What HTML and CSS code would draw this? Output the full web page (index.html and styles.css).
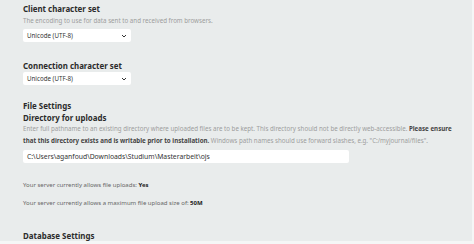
FILE: index.html
```html
<!DOCTYPE html>
<html lang="en">
<head>
    <meta charset="UTF-8">
    <meta name="viewport" content="width=device-width, initial-scale=1.0">
    <title>Installation</title>
    <link rel="stylesheet" href="styles.css">
</head>
<body>
    <div class="page">
        <div class="field">
            <div class="label">Client character set</div>
            <div class="hint">The encoding to use for data sent to and received from browsers.</div>
            <div class="select">
                <span>Unicode (UTF-8)</span>
                <svg width="6" height="4" viewBox="0 0 6 4"><path d="M1 1 L3 3 L5 1" fill="none" stroke="#333" stroke-width="1"/></svg>
            </div>
        </div>

        <div class="field second">
            <div class="label">Connection character set</div>
            <div class="select">
                <span>Unicode (UTF-8)</span>
                <svg width="6" height="4" viewBox="0 0 6 4"><path d="M1 1 L3 3 L5 1" fill="none" stroke="#333" stroke-width="1"/></svg>
            </div>
        </div>

        <div class="files">
            <div class="section-title">File Settings</div>
            <div class="label">Directory for uploads</div>
            <div class="hint wide">Enter full pathname to an existing directory where uploaded files are to be kept. This directory should not be directly web-accessible. <b>Please ensure that this directory exists and is writable prior to installation.</b> Windows path names should use forward slashes, e.g. "C:/myjournal/files".</div>
            <div class="input">C:\Users\aganfoud\Downloads\Studium\Masterarbeit\ojs</div>

            <p class="note">Your server currently allows file uploads: <b>Yes</b></p>
            <p class="note">Your server currently allows a maximum file upload size of: <b>50M</b></p>
        </div>

        <div class="db">
            <div class="section-title">Database Settings</div>
        </div>
    </div>
</body>
</html>
```

FILE: styles.css
```css
* {
    margin: 0;
    padding: 0;
    box-sizing: border-box;
}

body {
    background: #f5f6f6;
    font-family: "Noto Sans", "Open Sans", sans-serif;
    color: #2b2b2b;
}

.page {
    width: 472px;
    height: 241px;
    overflow: hidden;
    background: #e9ecec;
    padding: 4px 0 0 23px;
}

.label,
.section-title {
    font-size: 7.9px;
    font-weight: 700;
    line-height: 10px;
    color: #2b2b2b;
}

.hint {
    font-size: 6.2px;
    line-height: 12px;
    color: #9d9d9d;
    margin-top: 1px;
}

.hint b {
    color: #444;
}

.wide {
    width: 433px;
    margin-top: 0;
}

.field {
    margin-bottom: 19px;
}

.field.second {
    margin-bottom: 16px;
}

.select {
    width: 108px;
    height: 13px;
    background: #fff;
    border-radius: 2px;
    display: flex;
    align-items: center;
    justify-content: space-between;
    padding: 0 4px;
    font-size: 6.2px;
    color: #333;
    margin-top: 2px;
}

.second .select {
    margin-top: 1px;
}

.files .section-title {
    margin-bottom: 2px;
}

.input {
    width: 326px;
    height: 13px;
    background: #fff;
    border-radius: 2px;
    display: flex;
    align-items: center;
    padding: 0 4px;
    font-size: 6.8px;
    color: #333;
    margin-top: 3px;
}

.note {
    font-size: 6px;
    line-height: 12px;
    color: #666;
}

.note:first-of-type {
    margin-top: 16px;
}

.note + .note {
    margin-top: 6px;
}

.note b {
    color: #222;
}

.db {
    margin-top: 22px;
}
```
